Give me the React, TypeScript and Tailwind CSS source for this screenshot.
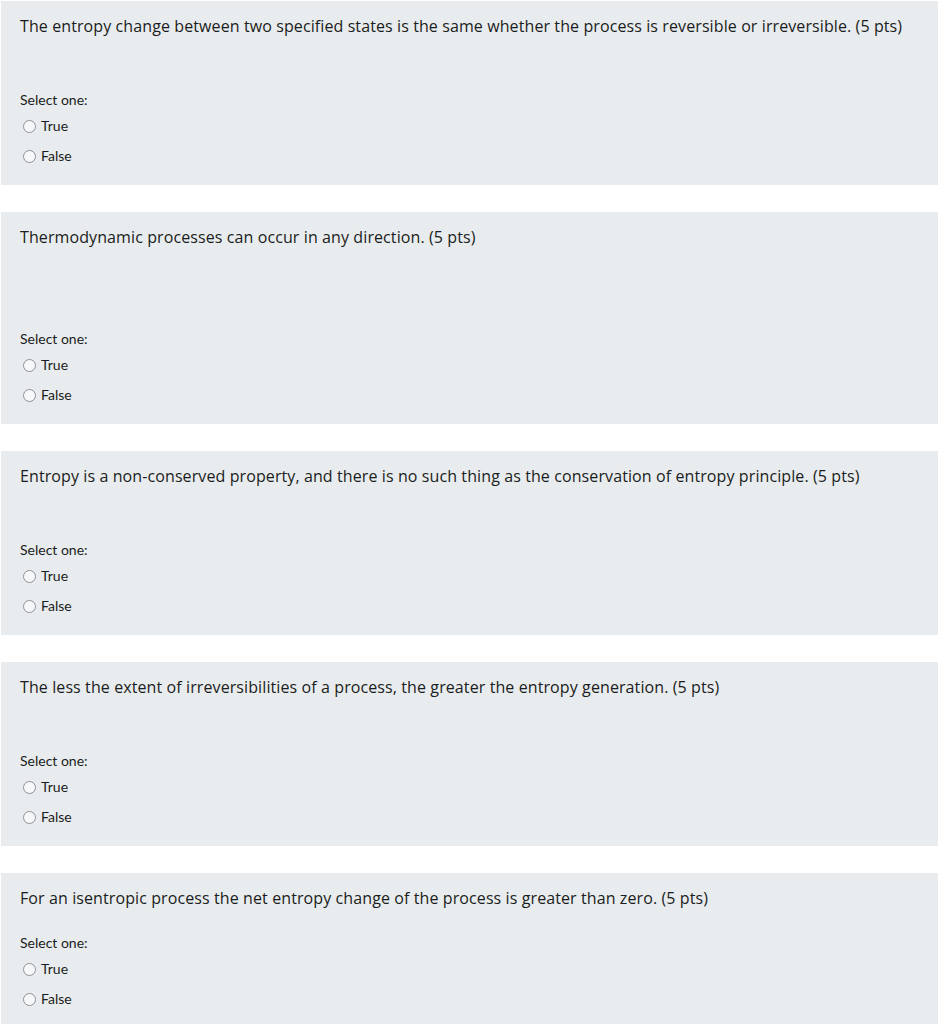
import React from 'react';

interface Question {
  text: string;
  gap: string; // space between question and "Select one:"
}

const questions: Question[] = [
  {
    text: 'The entropy change between two specified states is the same whether the process is reversible or irreversible. (5 pts)',
    gap: 'mt-[52px]',
  },
  {
    text: 'Thermodynamic processes can occur in any direction. (5 pts)',
    gap: 'mt-[80px]',
  },
  {
    text: 'Entropy is a non-conserved property, and there is no such thing as the conservation of entropy principle. (5 pts)',
    gap: 'mt-[52px]',
  },
  {
    text: 'The less the extent of irreversibilities of a process, the greater the entropy generation. (5 pts)',
    gap: 'mt-[52px]',
  },
  {
    text: 'For an isentropic process the net entropy change of the process is greater than zero. (5 pts)',
    gap: 'mt-[23px]',
  },
];

const Radio: React.FC<{ label: string }> = ({ label }) => (
  <label className="flex items-center h-[30px] ml-[3px] gap-[5px] cursor-pointer">
    <span className="w-[13px] h-[13px] rounded-full border border-[#8d9198] bg-[#f7f8f9] shrink-0" />
    <span className="text-[14px] leading-5">{label}</span>
  </label>
);

const QuestionCard: React.FC<{ q: Question }> = ({ q }) => (
  <div className="bg-[#e9ecee] pl-[19px] pr-4 pt-[13px] pb-[14px] mb-[27px]">
    <p className="text-[16px] leading-6 tracking-[0.1px] font-['Open_Sans',sans-serif]">{q.text}</p>
    <div className={`${q.gap} text-[14px] leading-5`}>Select one:</div>
    <div className="mt-px">
      <Radio label="True" />
      <Radio label="False" />
    </div>
  </div>
);

export default function App() {
  return (
    <div
      className="min-h-screen w-full bg-white pl-px pt-px text-[#1a1d21]"
      style={{ fontFamily: '"Segoe UI", Lato, "Noto Sans", sans-serif' }}
    >
      {questions.map((q, i) => (
        <QuestionCard key={i} q={q} />
      ))}
    </div>
  );
}
